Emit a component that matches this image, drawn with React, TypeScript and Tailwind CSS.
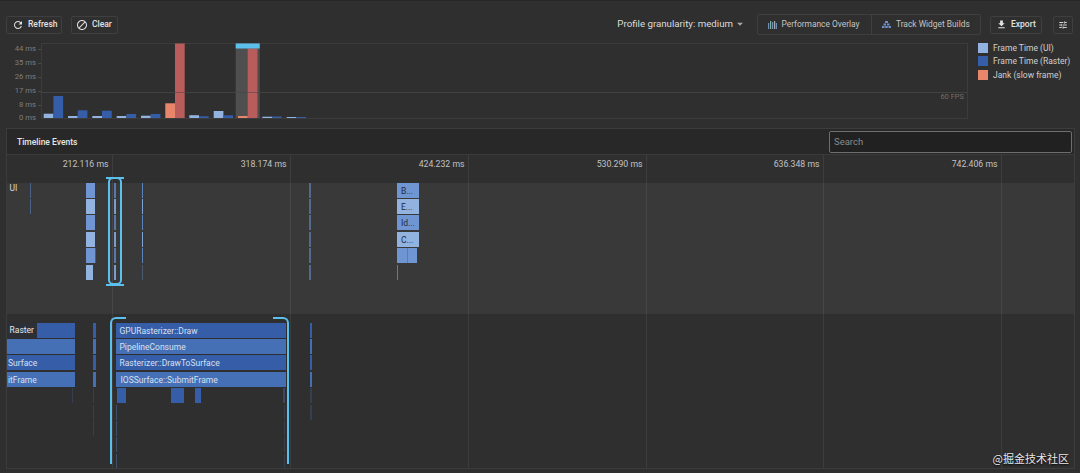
import type React from "react"
import { MdArrowDropDown, MdBlock, MdFileDownload, MdRefresh, MdTune } from "react-icons/md"

type Ev = { x: number; w: number; row: number; color: string; label?: string; pad?: number }

const ROW = 16.4
const UI_DARK = "#6f96d2"
const UI_LIGHT = "#92b3e0"
const RASTER_DARK = "#365ea8"
const RASTER_LIGHT = "#4570b5"
const DIM = "#3f5068"
const DIM2 = "#34404f"

const yLabels = [
  { t: "44 ms", y: 48.7 },
  { t: "35 ms", y: 62.7 },
  { t: "26 ms", y: 76.7 },
  { t: "17 ms", y: 90.7 },
  { t: "8 ms", y: 105 },
  { t: "0 ms", y: 117.7 },
]

// x, top of ui bar, top of raster bar (page px), bottom is always 118
const frames = [
  [43.7, 113.7, 96],
  [68, 116, 110.3],
  [92.3, 116, 110.7],
  [116.7, 116, 114],
  [141, 115.7, 114],
  [165.3, 103.3, 43.5],
  [189.3, 115.2, 116.3],
  [213.7, 111, 115.3],
  [238, 116, 48.6],
  [262.3, 116.7, 116.5],
  [286.7, 117, 117],
]

const ticks = [
  { t: "212.116 ms", x: 112 },
  { t: "318.174 ms", x: 290 },
  { t: "424.232 ms", x: 468 },
  { t: "530.290 ms", x: 646 },
  { t: "636.348 ms", x: 823 },
  { t: "742.406 ms", x: 1001 },
]

const alt = (i: number) => (i % 2 === 0 ? UI_DARK : UI_LIGHT)

const uiEvents: Ev[] = [
  { x: 30, w: 1, row: 0, color: "#4a6288" },
  { x: 30, w: 1, row: 1, color: "#4a6288" },
  ...[0, 1, 2, 3, 4].map((r) => ({ x: 86, w: 9, row: r, color: alt(r) })),
  { x: 95, w: 1, row: 4, color: "#4c5a72" },
  { x: 86, w: 7, row: 5, color: UI_LIGHT },
  ...[0, 1, 2, 3, 4, 5].map((r) => ({ x: 114, w: 2, row: r, color: r % 2 === 0 ? "#5a78a8" : "#7d9cc8" })),
  ...[0, 1, 2, 3, 4].map((r) => ({ x: 142, w: 1, row: r, color: r % 2 === 0 ? "#5c82bc" : "#7fa2d4" })),
  { x: 142, w: 1, row: 5, color: "#4a5a72" },
  ...[0, 1, 2, 3, 4, 5].map((r) => ({ x: 309, w: 1.5, row: r, color: "#55698a" })),
  { x: 397, w: 22, row: 0, color: UI_DARK, label: "B...", pad: 4 },
  { x: 397, w: 22, row: 1, color: UI_LIGHT, label: "E...", pad: 4 },
  { x: 397, w: 22, row: 2, color: UI_DARK, label: "Id...", pad: 4 },
  { x: 397, w: 22, row: 3, color: UI_LIGHT, label: "C...", pad: 4 },
  { x: 397, w: 10, row: 4, color: UI_DARK },
  { x: 407, w: 10, row: 4, color: UI_DARK },
  { x: 407, w: 1, row: 4, color: "#5a7db2" },
  { x: 397, w: 1, row: 5, color: "#66799a" },
]

const rasterAlt = (i: number) => (i % 2 === 0 ? RASTER_DARK : RASTER_LIGHT)

const rasterEvents: Ev[] = [
  { x: 37, w: 38, row: 0, color: RASTER_DARK },
  { x: 7, w: 68, row: 1, color: RASTER_LIGHT },
  { x: 7, w: 68, row: 2, color: RASTER_DARK, label: "Surface", pad: 1 },
  { x: 7, w: 68, row: 3, color: RASTER_LIGHT, label: "itFrame", pad: 1 },
  { x: 72, w: 1, row: 4, color: DIM2 },
  ...[0, 1, 2, 3].map((r) => ({ x: 93, w: 3, row: r, color: rasterAlt(r) })),
  ...[4, 5, 6].map((r) => ({ x: 93, w: 1, row: r, color: DIM2 })),
  { x: 116, w: 169.5, row: 0, color: RASTER_DARK, label: "GPURasterizer::Draw", pad: 3.5 },
  { x: 116, w: 169.5, row: 1, color: RASTER_LIGHT, label: "PipelineConsume", pad: 3.5 },
  { x: 116, w: 169.5, row: 2, color: RASTER_DARK, label: "Rasterizer::DrawToSurface", pad: 3.5 },
  { x: 116, w: 169.5, row: 3, color: RASTER_LIGHT, label: "IOSSurface::SubmitFrame", pad: 4.5 },
  { x: 116.5, w: 9.5, row: 4, color: RASTER_DARK },
  { x: 171, w: 13, row: 4, color: RASTER_DARK },
  { x: 195, w: 6, row: 4, color: RASTER_DARK },
  { x: 283, w: 2, row: 4, color: "#3a4a66" },
  ...[5, 6, 7, 8].map((r) => ({ x: 116, w: 1, row: r, color: DIM })),
  ...[5, 6, 7, 8].map((r) => ({ x: 284, w: 1, row: r, color: DIM2 })),
  ...[0, 1, 2, 3].map((r) => ({ x: 310, w: 2, row: r, color: rasterAlt(r) })),
  ...[4, 5].map((r) => ({ x: 310, w: 1.5, row: r, color: DIM2 })),
]

function EventBars({ events, top }: { events: Ev[]; top: number }) {
  return (
    <>
      {events.map((e, i) => (
        <div
          key={i}
          className="absolute h-[15.2px] overflow-hidden whitespace-nowrap text-[8.5px] leading-[16px]"
          style={{
            left: e.x - 7,
            top: top + e.row * ROW,
            width: e.w,
            backgroundColor: e.color,
            paddingLeft: e.pad,
            color: top < 100 ? "#1f2a3d" : "#d8e0f0",
          }}
        >
          {e.label}
        </div>
      ))}
    </>
  )
}

function OutlineButton({ icon, label, className }: { icon: React.ReactNode; label: string; className: string }) {
  return (
    <button
      className={`flex h-[18px] items-center gap-[4px] whitespace-nowrap rounded-[2px] border border-[#3f3f3f] text-[8.5px] font-medium text-[#e2e2e2] ${className}`}
    >
      {icon}
      {label}
    </button>
  )
}

export default function App() {
  return (
    <div className="flex h-[473px] w-[1080px] flex-col overflow-hidden bg-[#2f2f2f] font-['Roboto',sans-serif]">
      <div className="h-[1px] bg-[#262626]" />

      <div className="mt-[13px] flex h-[21px] items-center pl-[6px] pr-[7px]">
        <OutlineButton className="w-[56px] pl-[5px]" icon={<MdRefresh className="h-[12px] w-[12px]" />} label="Refresh" />
        <div className="ml-[9px]">
          <OutlineButton className="w-[47px] pl-[4px]" icon={<MdBlock className="h-[12px] w-[12px]" />} label="Clear" />
        </div>
        <div className="ml-auto flex items-center text-[9.7px] text-[#dcdcdc]">
          Profile granularity: medium
          <MdArrowDropDown className="h-[14px] w-[14px] text-[#aaaaaa]" />
        </div>
        <div className="ml-[10px] flex h-[21px] items-center whitespace-nowrap rounded-[2px] border border-[#3f3f3f] text-[8.4px] text-[#c4c4c4]">
          <div className="flex h-full w-[114px] items-center gap-[5px] border-r border-[#3f3f3f] pl-[9.5px]">
            <svg width="9" height="8" viewBox="0 0 9 8">
              <rect x="0" y="2" width="1.2" height="6" fill="#6f8fb8" />
              <rect x="2" y="0" width="1.2" height="8" fill="#7fb09a" />
              <rect x="4" y="1" width="1.2" height="7" fill="#6f8fb8" />
              <rect x="6" y="0" width="1.2" height="8" fill="#a8a8a8" />
              <rect x="7.8" y="2" width="1.2" height="6" fill="#6f8fb8" />
            </svg>
            Performance Overlay
          </div>
          <div className="flex h-full w-[108px] items-center gap-[5px] pl-[10px]">
            <svg width="9" height="7" viewBox="0 0 9 7" fill="#6f8fcc">
              <rect x="3" y="0" width="3" height="2" />
              <rect x="1.5" y="2.5" width="2.5" height="2" />
              <rect x="5" y="2.5" width="2.5" height="2" />
              <rect x="0" y="5" width="2.5" height="2" />
              <rect x="3.2" y="5" width="2.5" height="2" />
              <rect x="6.5" y="5" width="2.5" height="2" />
            </svg>
            Track Widget Builds
          </div>
        </div>
        <div className="ml-[9px]">
          <OutlineButton className="w-[52px] pl-[5px]" icon={<MdFileDownload className="h-[11px] w-[11px]" />} label="Export" />
        </div>
        <button className="ml-[11px] flex h-[18px] w-[20px] items-center justify-center rounded-[2px] border border-[#3f3f3f] text-[#d0d0d0]">
          <MdTune className="h-[10px] w-[10px]" />
        </button>
      </div>

      <div className="mt-[8px] flex h-[76px]">
        <div className="relative w-[41px] shrink-0 text-[7.7px] text-[#7e7e7e]">
          {yLabels.map((l) => (
            <div key={l.t} className="absolute right-[5px] leading-none" style={{ top: l.y - 43 - 4 }}>
              {l.t}
            </div>
          ))}
          {yLabels.slice(0, -1).map((l) => (
            <div key={l.t} className="absolute right-0 h-[1px] w-[3px] bg-[#4a4a4a]" style={{ top: l.y - 43 }} />
          ))}
        </div>
        <div className="relative h-[76px] w-[927px] shrink-0 border border-[#3c3c3c]">
          <svg className="absolute -left-px -top-px" width="927" height="76" viewBox="41 43 927 76">
            <line x1="41" x2="968" y1="92.5" y2="92.5" stroke="#414141" />
            <rect x="235.7" y="43" width="24" height="75" fill="#4e4f4e" />
            {frames.map(([x, ui, raster], i) => {
              const jank = i === 5 || i === 8
              return (
                <g key={i}>
                  <rect x={x} y={ui} width="9.7" height={118 - ui} fill={jank ? "#e8866c" : "#92b3e0"} />
                  <rect x={x + 9.7} y={raster} width="9.7" height={118 - raster} fill={jank ? "#b85c5c" : "#365ea8"} />
                </g>
              )
            })}
            <rect x="235.7" y="43.5" width="24" height="5" fill="#5bc0eb" />
            <line x1="41" x2="968" y1="92.5" y2="92.5" stroke="#414141" strokeOpacity="0.5" />
          </svg>
          <span className="absolute right-[3px] top-[49px] text-[7.5px] leading-none text-[#6e6e6e]">60 FPS</span>
        </div>
        <div className="ml-[10px] flex flex-col gap-[3.4px] whitespace-nowrap text-[8.5px] leading-[10px] text-[#d0d0d0]">
          <div className="flex items-center gap-[5px]">
            <div className="h-[10px] w-[10px] bg-[#92b3e0]" />
            Frame Time (UI)
          </div>
          <div className="flex items-center gap-[5px]">
            <div className="h-[10px] w-[10px] bg-[#365ea8]" />
            Frame Time (Raster)
          </div>
          <div className="flex items-center gap-[5px]">
            <div className="h-[10px] w-[10px] bg-[#e8866c]" />
            Jank (slow frame)
          </div>
        </div>
      </div>

      <div className="relative ml-[6px] mt-[9px] flex h-[341px] w-[1069px] flex-col border border-[#3c3c3c]">
        <div className="flex h-[26px] items-center justify-between border-b border-[#3a3a3a] bg-[#282828] pl-[10px] pr-[2px]">
          <span className="mt-[1px] text-[8.5px] font-medium text-[#e6e6e6]">Timeline Events</span>
          <div className="flex h-[22px] w-[243px] items-center rounded-[2px] border border-[#6e6e6e] bg-[#212121] pl-[4px] pt-[1px] text-[9.5px] text-[#8a8a8a]">
            Search
          </div>
        </div>

        <div className="relative flex-1 overflow-hidden">
          <div className="h-[27.5px]">
            {ticks.map((t) => (
              <span
                key={t.t}
                className="absolute top-[4.5px] text-[8.7px] leading-none text-[#c2c2c2]"
                style={{ right: 1067 - (t.x - 7) + 3.5 }}
              >
                {t.t}
              </span>
            ))}
          </div>
          <div className="h-[131.5px] bg-[#393939]" />

          <span className="absolute left-[2.5px] top-[29px] text-[8.5px] leading-none text-[#d8d8d8]">UI</span>
          <EventBars events={uiEvents} top={27.5} />
          <EventBars events={rasterEvents} top={167.5} />
          <div className="absolute left-0 top-[167.5px] h-[15.2px] w-[30px] bg-[#2c3036] pr-[3px] text-right text-[8.5px] leading-[15px] text-[#e4e8f0]">
            Raster
          </div>

          {ticks.map((t) => (
            <div key={t.x} className="absolute bottom-0 top-0 w-px bg-[#ffffff] opacity-[0.07]" style={{ left: t.x - 7 }} />
          ))}

          {/* ui selection bracket */}
          <div className="absolute left-[99px] top-[21.5px] h-[2px] w-[18px] bg-[#5bc0eb]" />
          <div className="absolute left-[101px] top-[22px] h-[108px] w-[14px] rounded-[5px] border-2 border-[#5bc0eb]" />
          <div className="absolute left-[99px] top-[129px] h-[2px] w-[18px] bg-[#5bc0eb]" />

          {/* raster selection bracket */}
          <div className="absolute left-[103px] top-[162px] h-[147px] w-[16px] rounded-tl-[6px] border-l-2 border-t-2 border-[#5bc0eb]" />
          <div className="absolute left-[266px] top-[162px] h-[147px] w-[16px] rounded-tr-[6px] border-r-2 border-t-2 border-[#5bc0eb]" />
        </div>

        <span className="absolute bottom-[4px] right-[5px] font-['Noto_Sans_CJK_SC',sans-serif] text-[11px] leading-none text-[#e8e8e8] [text-shadow:0_1px_2px_#000]">
          @掘金技术社区
        </span>
      </div>
    </div>
  )
}
